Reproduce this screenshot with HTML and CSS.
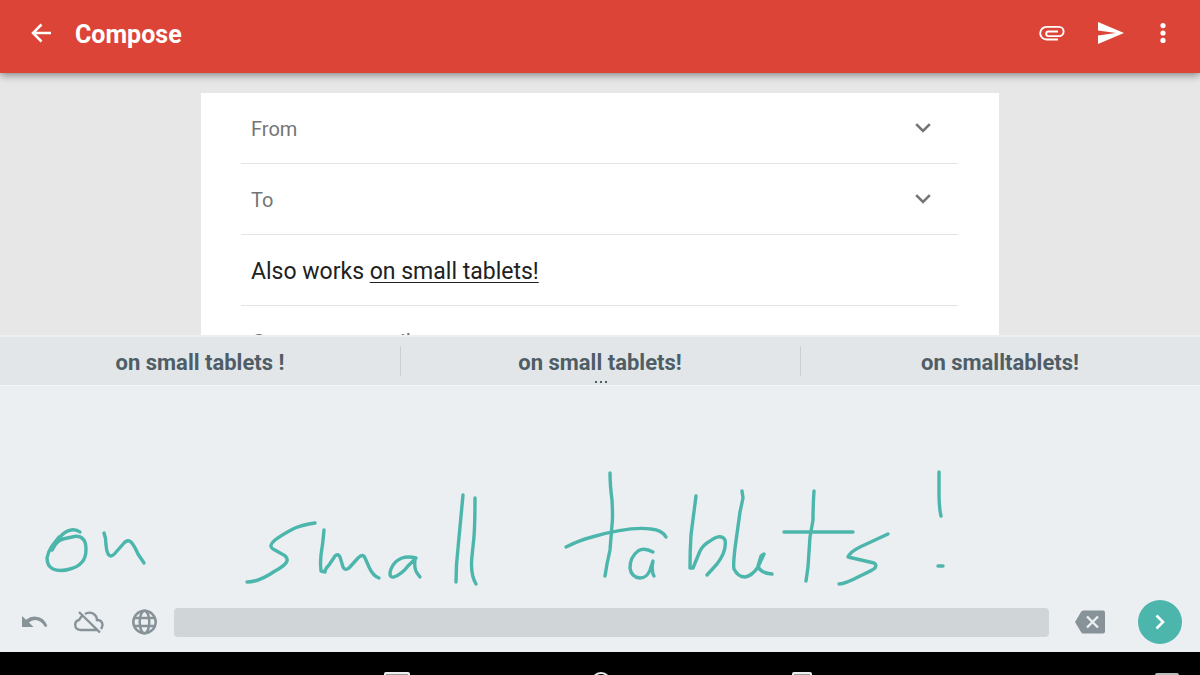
FILE: index.html
```
<!DOCTYPE html>
<html lang="en">
<head>
  <meta charset="UTF-8">
  <meta name="viewport" content="width=device-width, initial-scale=1">
  <title>Compose</title>
  <link rel="stylesheet" href="styles.css">
</head>
<body>
  <header class="app-bar">
    <button class="icon-btn" type="button" aria-label="Back">
      <svg width="20" height="20" viewBox="0 0 20 20"><path d="M10.500 1.500 2 10l8.500 8.500M2.500 10H20" fill="none" stroke="#fff" stroke-width="2.500"/></svg>
    </button>
    <h1 class="title">Compose</h1>
    <div class="actions">
      <button class="icon-btn" type="button" aria-label="Attach file">
        <svg width="26" height="16" viewBox="0 0 26 16"><path d="M19 14.500H7.500a6.200 6.200 0 0 1 0-12.600h12.500a4.600 4.600 0 0 1 0 9.200H9.500a2.300 2.300 0 0 1 0-4.600h9.500" fill="none" stroke="#fff" stroke-width="1.900"/></svg>
      </button>
      <button class="icon-btn" type="button" aria-label="Send">
        <svg width="26" height="22" viewBox="0 0 26 22"><path d="M0 0 26 11 0 22V13.500L18 11 0 8.500z" fill="#fff"/></svg>
      </button>
      <button class="icon-btn" type="button" aria-label="More options">
        <svg width="6" height="20" viewBox="0 0 6 20"><g fill="#fff"><circle cx="3" cy="2.600" r="2.600"/><circle cx="3" cy="10" r="2.600"/><circle cx="3" cy="17.400" r="2.600"/></g></svg>
      </button>
    </div>
  </header>

  <main class="page">
    <form class="card">
      <div class="field">
        <label for="from">From</label>
        <input id="from" type="email">
        <button class="icon-btn" type="button" aria-label="Choose account">
          <svg width="16" height="10" viewBox="0 0 16 10"><path d="M1.200 1.200 8 8l6.800-6.800" fill="none" stroke="#757575" stroke-width="2.600"/></svg>
        </button>
      </div>
      <div class="field">
        <label for="to">To</label>
        <input id="to" type="email">
        <button class="icon-btn" type="button" aria-label="Add Cc/Bcc">
          <svg width="16" height="10" viewBox="0 0 16 10"><path d="M1.200 1.200 8 8l6.800-6.800" fill="none" stroke="#757575" stroke-width="2.600"/></svg>
        </button>
      </div>
      <div class="field">
        <div class="subject" role="textbox" aria-label="Subject" contenteditable="true" spellcheck="false">Also works <u>on small tablets!</u></div>
      </div>
      <textarea class="message" aria-label="Message" placeholder="Compose email"></textarea>
    </form>
  </main>

  <section class="keyboard">
    <div class="suggestions">
      <button type="button">on small tablets !</button>
      <button class="best" type="button">on small tablets!</button>
      <button type="button">on smalltablets!</button>
    </div>

    <!-- handwriting strokes -->
    <svg class="ink" viewBox="0 386 1200 206" role="img" aria-label="on small tablets!">
      <!-- on -->
      <path d="M80 532Q76 529 71 530Q65 531 60 537L52 550Q56 541 63 539L72 537Q79 535 83 539Q86 542 86 549Q86 558 82 562Q78 567 70 569Q60 572 53 569Q47 566 47 558Q48 552 52 546L59 537"/>
      <path d="M104 533Q106 538 106 545Q107 556 111 556Q113 556 117 551L124 543Q128 539 131 542Q134 545 138 554L144 563"/>
      <!-- small -->
      <path d="M315 523Q302 525 295 528Q283 534 275 540Q268 546 273 549L282 554Q288 557 287 561Q286 565 275 571Q259 582 247 582"/>
      <path d="M324 530Q323 543 321 555Q320 564 321 571L325 572Q325 569 329 565L335 556Q338 553 340 557L343 567Q345 571 349 568L358 558Q363 553 365 558L369 567Q373 576 379 578"/>
      <path d="M416 558Q408 556 402 558Q394 561 391 569Q388 578 394 577Q402 574 408 566L415 559Q414 569 417 573L420 577"/>
      <path d="M463 495 458 548Q456 565 456 582"/>
      <path d="M475 498Q475 522 474 537L472 556Q470 574 476 584"/>
      <!-- tablets! -->
      <path d="M610 473Q610 485 612 500Q613 518 612 525L610 550 607 564 605 576"/>
      <path d="M566 547Q580 540 592 537Q630 526 651 529Q662 530 666 537"/>
      <path d="M653 552Q644 547 638 551Q630 557 630 568Q631 577 640 578Q647 578 650 570L653 561Q651 571 654 576"/>
      <path d="M696 496 691 535Q690 550 690 568L693 568 700 551Q703 545 710 541Q721 533 725 540Q727 551 717 564L707 575"/>
      <path d="M742 491 743 498 740 512 735 548Q733 566 734 569Q738 577 745 577Q752 576 758 567L764 554 761 556 758 566Q760 573 772 574"/>
      <path d="M814 491Q813 505 813 520L810 537 808 567 806 581M784 532H853"/>
      <path d="M888 534 860 547Q850 552 848 557L874 563Q877 564 875 568Q873 570 860 576Q845 584 839 584"/>
      <path d="M939 472V493Q939 508 941 516M938 566H943"/>
    </svg>

    <div class="toolbar">
      <button class="icon-btn" type="button" aria-label="Undo">
        <svg width="26" height="12" viewBox="0 0 26 12"><path d="M0 0 4 3.800Q9 0 14 .700Q22 1.300 25.500 10L23 11Q19 4 13 4Q9.500 4 7 6.500L11.500 11H0z" fill="#879398"/></svg>
      </button>
      <button class="icon-btn" type="button" aria-label="Cloud sync off">
        <svg width="30" height="22" viewBox="0 0 30 22"><g fill="none" stroke="#879398" stroke-width="2.400"><path d="M5 1 26 21.500M8 5C6 7 6 8 5 9Q1 10 1.200 14Q1.500 19 7 19H23M11 3Q15 .500 19 2.500Q23 5 23 9Q28 9 28.500 13.500Q28.500 16 27 18"/></g></svg>
      </button>
      <button class="icon-btn" type="button" aria-label="Language">
        <svg width="26" height="26" viewBox="0 0 26 26"><g fill="none" stroke="#879398" stroke-width="2.500"><circle cx="12.500" cy="13" r="11.200"/><ellipse cx="12.500" cy="13" rx="4.800" ry="11.200"/><path d="M2 9H23M2 17H23"/></g></svg>
      </button>
      <button class="space" type="button" aria-label="Space"></button>
      <button class="icon-btn" type="button" aria-label="Backspace">
        <svg width="30" height="24" viewBox="0 0 30 24"><path d="M8 .500H28Q30 .500 30 2.500V21.500Q30 23.500 28 23.500H8Q7 23.500 6 22L0 12 6 2Q7 .500 8 .500z" fill="#879398"/><path d="m12 6.500 11 11M23 6.500l-11 11" stroke="#ebeff2" stroke-width="2.400"/></svg>
      </button>
      <button class="go" type="button" aria-label="Next">
        <svg width="10" height="16" viewBox="0 0 10 16"><path d="m1.500 1.500 6.500 6.500-6.500 6.500" fill="none" stroke="#fff" stroke-width="2.600"/></svg>
      </button>
    </div>
  </section>

  <nav class="nav-bar">
    <div class="nav-main">
      <button class="icon-btn" type="button" aria-label="Hide keyboard">
        <svg width="26" height="20" viewBox="0 0 26 20"><rect x="1" y="1" width="24" height="18" rx="1" fill="#999" stroke="#eee" stroke-width="2"/></svg>
      </button>
      <button class="icon-btn" type="button" aria-label="Home">
        <svg width="20" height="20" viewBox="0 0 20 20"><circle cx="10" cy="10" r="9" fill="none" stroke="#eee" stroke-width="2"/></svg>
      </button>
      <button class="icon-btn" type="button" aria-label="Recent apps">
        <svg width="20" height="20" viewBox="0 0 20 20"><rect x="1" y="1" width="18" height="18" rx="1" fill="#999" stroke="#eee" stroke-width="2"/></svg>
      </button>
    </div>
    <button class="icon-btn nav-ime" type="button" aria-label="Change keyboard">
      <svg width="24" height="20" viewBox="0 0 24 20"><rect x="1" y="2" width="22" height="17" rx="1" fill="none" stroke="#bbb" stroke-width="2"/></svg>
    </button>
  </nav>
</body>
</html>
```

FILE: styles.css
```
* {
  box-sizing: border-box;
}

body {
  margin: 0;
  height: 100vh;
  display: flex;
  flex-direction: column;
  overflow: hidden;
  background: #e7e7e7;
  font-family: Roboto, "Liberation Sans", sans-serif;
}

button, input, textarea {
  margin: 0;
  padding: 0;
  border: none;
  background: none;
  font: inherit;
  outline: none;
}

button {
  cursor: pointer;
}

svg {
  display: block;
}

.icon-btn {
  display: flex;
  flex: none;
}

/* top bar */
.app-bar {
  display: flex;
  flex: none;
  align-items: center;
  height: 73px;
  padding: 0 34px 8px 31px;
  background: #db4437;
  box-shadow: 0 2px 8px rgba(0, 0, 0, .45);
  z-index: 1;
}

.title {
  margin: 4px 0 0 24px;
  color: #fff;
  font-size: 25px;
  line-height: 32px;
  font-weight: 700;
}

.actions {
  display: flex;
  align-items: center;
  gap: 33px;
  margin-left: auto;
}

.actions .icon-btn:last-child {
  margin-left: 3px;
}

/* message form */
.page {
  flex: 1;
  min-height: 0;
  padding-top: 20px;
  overflow: hidden;
}

.card {
  width: 66.5%;
  margin: 0 auto;
  padding: 0 41px 0 40px;
  background: #fff;
}

.field {
  display: flex;
  align-items: center;
  height: 71px;
  padding: 0 27px 0 10px;
  border-bottom: 1px solid #e4e4e4;
}

.field label {
  padding-top: 2px;
  color: #757575;
  font-size: 20px;
}

.field input {
  flex: 1;
  min-width: 0;
  padding: 0 10px;
  font-size: 20px;
}

.subject {
  flex: 1;
  padding-top: 2px;
  color: #212121;
  font-size: 23px;
  outline: none;
}

.subject u {
  text-decoration-thickness: 1px;
  text-underline-offset: 3px;
  text-decoration-skip-ink: none;
}

.message {
  display: block;
  width: 100%;
  height: 200px;
  padding: 24px 10px;
  font-size: 23px;
  resize: none;
}

.message::placeholder {
  color: #757575;
}

/* handwriting keyboard */
.keyboard {
  flex: none;
  background: #ebeff2;
}

.suggestions {
  display: grid;
  grid-template-columns: repeat(3, 1fr);
  height: 51px;
  background: #e2e6e9;
  border-top: 2px solid #eceff1;
  border-bottom: 1px solid #f3f6f8;
}

.suggestions button {
  position: relative;
  padding-top: 3px;
  color: #4f5e66;
  font-size: 22px;
  font-weight: 700;
}

.suggestions button + button::before {
  content: "";
  position: absolute;
  left: 0;
  top: 9px;
  bottom: 9px;
  border-left: 1px solid #cbd0d3;
}

/* more candidates marker */
.suggestions .best::after {
  content: "";
  position: absolute;
  left: 50%;
  bottom: 2px;
  width: 2px;
  height: 2px;
  background: #4f5e66;
  box-shadow: -5px 0 #4f5e66, 5px 0 #4f5e66;
}

.ink {
  width: 100%;
  fill: none;
  stroke: #4db6ac;
  stroke-width: 3.4;
  stroke-linecap: round;
  stroke-linejoin: round;
}

.toolbar {
  display: flex;
  align-items: center;
  height: 60px;
  padding: 0 18px 0 22px;
}

.toolbar .icon-btn {
  margin-right: 26px;
}

.toolbar .icon-btn + .icon-btn {
  margin-right: 28px;
}

.toolbar .icon-btn + .space {
  margin-left: -12px;
}

.space {
  flex: 1;
  height: 29px;
  margin-right: 26px;
  border-radius: 4px;
  background: #d0d5d8;
}

.toolbar .space + .icon-btn {
  margin-right: 33px;
}

.go {
  display: flex;
  flex: none;
  align-items: center;
  justify-content: center;
  width: 44px;
  height: 44px;
  border-radius: 50%;
  background: #4db6ac;
}

/* system bar, only the top edge is on screen */
.nav-bar {
  display: grid;
  flex: none;
  grid-template-columns: 1fr auto 1fr;
  height: 23px;
  padding: 20px 4px 0 0;
  overflow: hidden;
  background: #000;
}

.nav-main {
  grid-column: 2;
  display: flex;
  gap: 181px;
}

.nav-ime {
  justify-self: end;
  margin-right: 17px;
}
```
